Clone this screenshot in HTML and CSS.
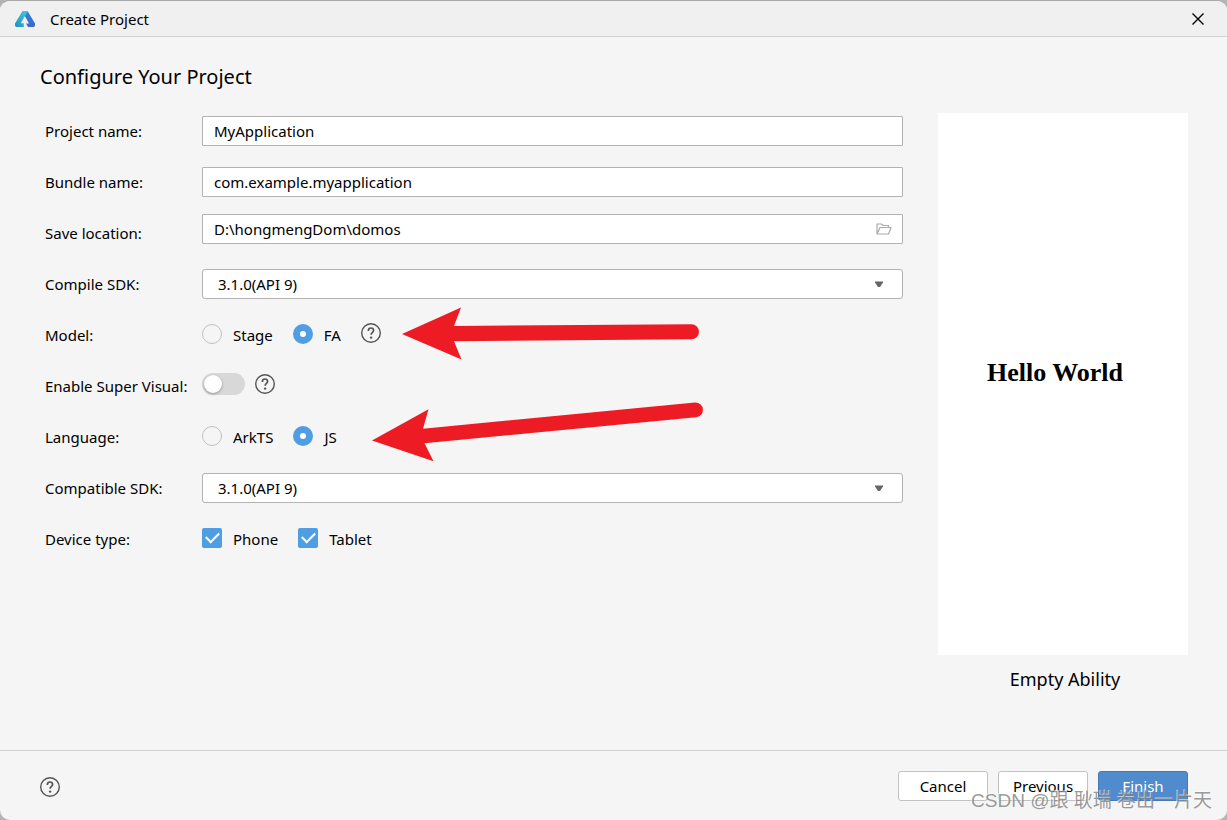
FILE: index.html
```html
<!DOCTYPE html>
<html lang="en">
<head>
<meta charset="utf-8">
<title>Create Project</title>
<link rel="stylesheet" href="styles.css">
</head>
<body>
<svg class="defs" width="0" height="0" aria-hidden="true">
  <symbol id="help" viewBox="0 0 20 20">
    <circle cx="10" cy="10" r="9.3" fill="none" stroke="#555" stroke-width="1.4"/>
    <path d="M7.4 8V7.6a2.6 2.6 0 0 1 5.2 0c0 1.8-2.5 2-2.5 4.2" fill="none" stroke="#555" stroke-width="1.7"/>
    <circle cx="10.1" cy="14.6" r="1.2" fill="#555"/>
  </symbol>
</svg>
<div class="dialog">
  <header class="titlebar">
    <svg class="logo" viewBox="0 0 20 16" aria-hidden="true">
      <defs>
        <linearGradient id="teal" x1="1" y1="0" x2="0" y2="1"><stop offset="0" stop-color="#45cdd5"/><stop offset="1" stop-color="#1b90c6"/></linearGradient>
        <linearGradient id="blue" x1="0" y1="0" x2="1" y2="1"><stop offset="0" stop-color="#2f86dc"/><stop offset="1" stop-color="#3e62c8"/></linearGradient>
      </defs>
      <path d="M7.500 0h5L10 5 5.800 12.300H8.800V16H1.600Q0 16 0 14.200V12.500Z" fill="url(#teal)"/>
      <path d="M12.500 0L20 12.500v1.700Q20 16 18.400 16H13L11 12.600h3L9.800 5Z" fill="url(#blue)"/>
    </svg>
    <span class="title">Create Project</span>
    <button class="close" type="button" aria-label="Close">
      <svg viewBox="0 0 12 12" width="12" height="12"><path d="M.5.5l11 11M11.500.5l-11 11" stroke="#000" stroke-width="1.4"/></svg>
    </button>
  </header>

  <main class="content">
    <h1 class="heading">Configure Your Project</h1>
    <div class="columns">
      <form class="form">
        <div class="row"><label class="label" for="name">Project name:</label><input class="box" id="name" type="text" value="MyApplication"></div>
        <div class="row"><label class="label" for="bundle">Bundle name:</label><input class="box" id="bundle" type="text" value="com.example.myapplication"></div>
        <div class="row"><label class="label" for="location">Save location:</label>
          <div class="field raised"><input class="box" id="location" type="text" value="D:\hongmengDom\domos">
            <button class="browse" type="button" aria-label="Browse"><svg viewBox="0 0 16 12" width="16" height="12"><path d="M1 11V1h4.500l1.500 1.500h5.500v2M1 11l3-6.500h11L12.600 11Z" fill="none" stroke="#aaa" stroke-width="1.200" stroke-linejoin="round"/></svg></button>
          </div>
        </div>
        <div class="row"><label class="label" for="compile">Compile SDK:</label>
          <div class="field"><select class="box select" id="compile"><option>3.1.0(API 9)</option></select>
            <svg class="caret" viewBox="0 0 10 7" aria-hidden="true"><path d="M1 .5h8v1L6 6H4L1 1.500Z" fill="#666"/></svg></div>
        </div>
        <div class="row"><span class="label" id="model">Model:</span>
          <div class="options" role="radiogroup" aria-labelledby="model">
            <label class="option"><input class="radio" type="radio" name="model">Stage</label>
            <label class="option"><input class="radio" type="radio" name="model" checked>FA</label>
            <button class="help" type="button" aria-label="About model"><svg width="20" height="20"><use href="#help"/></svg></button>
          </div>
        </div>
        <div class="row"><label class="label" for="visual">Enable Super Visual:</label>
          <div class="options switches"><input class="switch" id="visual" type="checkbox" role="switch">
            <button class="help" type="button" aria-label="About Super Visual"><svg width="20" height="20"><use href="#help"/></svg></button></div>
        </div>
        <div class="row"><span class="label" id="language">Language:</span>
          <div class="options" role="radiogroup" aria-labelledby="language">
            <label class="option"><input class="radio" type="radio" name="language">ArkTS</label>
            <label class="option"><input class="radio" type="radio" name="language" checked>JS</label>
          </div>
        </div>
        <div class="row"><label class="label" for="compatible">Compatible SDK:</label>
          <div class="field"><select class="box select" id="compatible"><option>3.1.0(API 9)</option></select>
            <svg class="caret" viewBox="0 0 10 7" aria-hidden="true"><path d="M1 .5h8v1L6 6H4L1 1.500Z" fill="#666"/></svg></div>
        </div>
        <div class="row"><span class="label" id="device">Device type:</span>
          <div class="options" role="group" aria-labelledby="device">
            <label class="option"><input class="check" type="checkbox" checked>Phone</label>
            <label class="option"><input class="check" type="checkbox" checked>Tablet</label>
          </div>
        </div>
        <svg class="arrows" viewBox="370 300 340 170" aria-hidden="true">
          <g fill="#ed1c24">
            <path d="M402 334L461 307.500 454 326 691.500 324.300a7.500 7.500 0 0 1 0 15L454 341.200 461.500 359.500Z"/>
            <path d="M372 440.500L428.500 409.300 423 428.700 695 402.500a7.400 7.400 0 0 1 1 14.800L424.500 443.300 433.500 461.300Z"/>
          </g>
        </svg>
      </form>
      <aside class="preview">
        <div class="screen">Hello World</div>
        <div class="caption">Empty Ability</div>
      </aside>
    </div>
  </main>

  <footer class="footer">
    <button class="help" type="button" aria-label="Help"><svg width="20" height="20"><use href="#help"/></svg></button>
    <div class="actions">
      <button class="button" type="button">Cancel</button>
      <button class="button" type="button">Previous</button>
      <button class="button primary" type="button">Finish</button>
    </div>
  </footer>
  <div class="watermark">CSDN @跟 耿瑞 卷出一片天</div>
</div>
</body>
</html>
```
FILE: styles.css
```css
* { box-sizing: border-box; }
body {
  margin: 0;
  background: #b4b4b4;
  color: #000;
  font: 15px/20px "Noto Sans", "Open Sans", sans-serif;
}
button, input, select { font: inherit; color: inherit; margin: 0; }
button { padding: 0; border: 0; background: none; }
svg { display: block; }
.defs { position: absolute; }

.dialog {
  position: relative;
  display: flex;
  flex-direction: column;
  min-height: 100vh;
  overflow: hidden;
  background: #f5f5f5;
  border-top: 1px solid #a8a8a8;
  border-radius: 10px;
}
.titlebar {
  display: flex;
  align-items: center;
  height: 36px;
  padding: 0 22px 0 15px;
  background: #f0f0f0;
  border-bottom: 1px solid #d0d0d0;
}
.logo { width: 20px; height: 16px; }
.title { flex: 1; margin-left: 15px; }
.close { padding: 1px; }

.content { flex: 1; padding: 24px 39px 0 40px; }
.heading { margin: 0; font-size: 20px; line-height: 32px; font-weight: 400; }
.columns { display: flex; gap: 35px; padding: 12px 0 0 5px; }
.form { position: relative; flex: 1; }
.row { display: grid; grid-template-columns: 157px 1fr; align-items: center; height: 51px; }
.field { position: relative; }
.raised { margin-bottom: 8px; }
.box {
  display: block;
  width: 100%;
  height: 30px;
  padding: 0 11px;
  background: #fff;
  border: 1px solid #b3b3b3;
  border-radius: 1px;
}
.select { appearance: none; padding: 0 15px; border-radius: 3px; }
.caret { position: absolute; right: 19px; top: 12px; width: 10px; height: 7px; }
.browse { position: absolute; right: 11px; top: 9px; }

.options { display: flex; align-items: center; gap: 20px; }
.switches { gap: 10px; margin-bottom: 4px; }
.option { display: flex; align-items: center; gap: 11px; }
.radio, .check { appearance: none; width: 20px; height: 20px; margin-bottom: 2px; }
.radio { border: 1px solid #c2c2c2; border-radius: 50%; }
.radio:checked { border: 7px solid #4f9de3; background: #fff; }
.check {
  display: grid;
  place-items: center;
  border-radius: 2px;
  background: #4f9de3;
}
.check::after {
  content: "";
  width: 11px;
  height: 6px;
  margin-bottom: 3px;
  border: solid #fff;
  border-width: 0 0 2px 2px;
  transform: rotate(-45deg);
}
.switch {
  appearance: none;
  width: 43px;
  height: 22px;
  padding: 2px;
  border-radius: 11px;
  background: #d8d8d8;
}
.switch::before {
  content: "";
  display: block;
  width: 18px;
  height: 18px;
  border-radius: 50%;
  background: #fff;
  box-shadow: 0 1px 3px #0005;
}
.options > .help { margin-bottom: 4px; }
.switches > .help { margin-bottom: 0; }
.arrows { position: absolute; left: 325px; top: 195px; width: 340px; height: 170px; }

.preview { width: 250px; padding-top: 8px; text-align: center; }
.screen {
  display: grid;
  place-items: center;
  height: 542px;
  padding: 0 16px 22px 0;
  background: #fff;
  font: bold 26px/30px "Liberation Serif", serif;
}
.caption { margin-top: 12px; padding-left: 4px; font-size: 18px; line-height: 24px; }

.footer {
  display: flex;
  align-items: center;
  justify-content: space-between;
  height: 70px;
  padding: 0 39px 0 40px;
  border-top: 1px solid #d0d0d0;
}
.footer .help { margin-top: 2px; }
.actions { display: flex; gap: 10px; }
.button {
  width: 90px;
  height: 30px;
  background: #fff;
  border: 1px solid #c2c2c2;
  border-radius: 3px;
}
.primary { background: #4f8bcd; border-color: #4579ba; color: #fff; }
.watermark {
  position: absolute;
  right: 15px;
  bottom: 6px;
  color: #808080cc;
  font: 19px/26px "Liberation Sans", "Noto Sans CJK SC", sans-serif;
  text-shadow: -1px -1px 0 #ffffff90;
  pointer-events: none;
}
```
